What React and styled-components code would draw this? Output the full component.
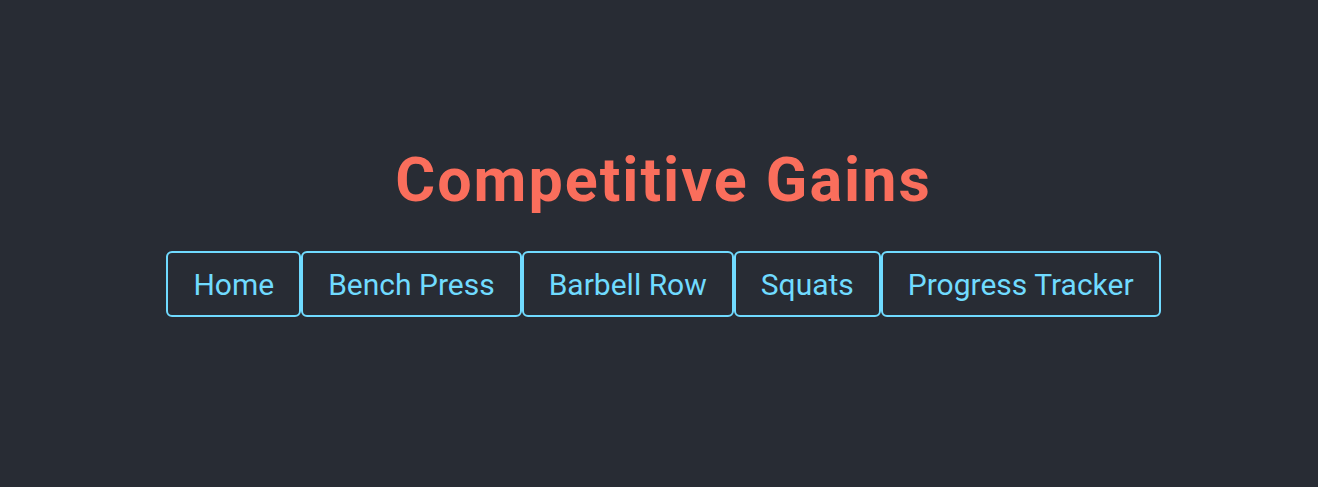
import React from 'react';
import styled, { createGlobalStyle } from 'styled-components';

const GlobalStyle = createGlobalStyle`
  body {
    margin: 0;
    background: #282c34;
    font-family: Roboto, sans-serif;
  }
`;

const Header = styled.header`
  box-sizing: border-box;
  min-height: 100vh;
  display: flex;
  flex-direction: column;
  align-items: center;
  justify-content: center;
  padding: 0 0 26px 9px;
`;

const Title = styled.h1`
  margin: 0 0 36px;
  color: #fa6e5c;
  font-size: 61px;
  font-weight: 700;
  line-height: 70px;
  letter-spacing: 2px;
  text-align: center;
`;

const Nav = styled.nav`
  display: flex;
  flex-wrap: wrap;
  justify-content: center;
`;

const NavLink = styled.a`
  padding: 14px 25px 12px;
  border: 2px solid #70dbff;
  border-radius: 6px;
  color: #70dbff;
  font-size: 30px;
  line-height: 36px;
  text-decoration: none;
`;

const pages = [
  { label: 'Home', href: '#home' },
  { label: 'Bench Press', href: '#bench-press' },
  { label: 'Barbell Row', href: '#barbell-row' },
  { label: 'Squats', href: '#squats' },
  { label: 'Progress Tracker', href: '#progress-tracker' },
];

export default function App() {
  return (
    <>
      <GlobalStyle />
      <Header>
        <Title>Competitive Gains</Title>
        <Nav aria-label="Main">
          {pages.map((page) => (
            <NavLink key={page.href} href={page.href}>{page.label}</NavLink>
          ))}
        </Nav>
      </Header>
    </>
  );
}
